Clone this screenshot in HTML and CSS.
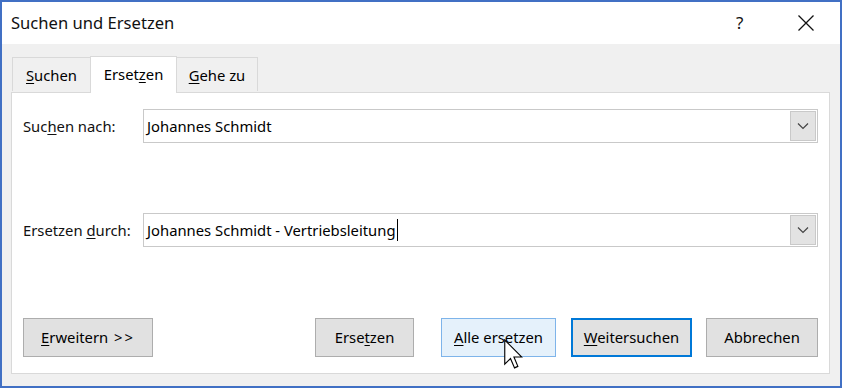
FILE: index.html
```html
<!DOCTYPE html>
<html lang="de">
<head>
<meta charset="utf-8">
<title>Suchen und Ersetzen</title>
<link rel="stylesheet" href="styles.css">
</head>
<body>
<div class="window">
  <div class="titlebar">
    <span class="title">Suchen und Ersetzen</span>
    <span class="help">?</span>
    <span class="close">
      <svg width="16" height="16" viewBox="0 0 16 16"><path d="M0.5 0.5 L15.5 15.5 M15.5 0.5 L0.5 15.5" stroke="#111" stroke-width="1.3" fill="none"/></svg>
    </span>
  </div>
  <div class="body">
    <div class="tabs">
      <div class="tab"><u>S</u>uchen</div>
      <div class="tab active">Erset<u>z</u>en</div>
      <div class="tab"><u>G</u>ehe zu</div>
    </div>
    <div class="panel">
      <div class="row first">
        <span class="label">Suc<u>h</u>en nach:</span>
        <div class="combo">
          <span class="value">Johannes Schmidt</span>
          <span class="drop"><svg width="12" height="8" viewBox="0 0 12 8"><path d="M1 1.5 L6 6.5 L11 1.5" stroke="#444" stroke-width="1.2" fill="none"/></svg></span>
        </div>
      </div>
      <div class="row second">
        <span class="label">Ersetzen <u>d</u>urch:</span>
        <div class="combo">
          <span class="value">Johannes Schmidt - Vertriebsleitung<span class="caret"></span></span>
          <span class="drop"><svg width="12" height="8" viewBox="0 0 12 8"><path d="M1 1.5 L6 6.5 L11 1.5" stroke="#444" stroke-width="1.2" fill="none"/></svg></span>
        </div>
      </div>
      <div class="buttons">
        <button class="btn b-more"><u>E</u>rweitern <span class="arrows">&gt;&gt;</span></button>
        <div class="spacer"></div>
        <button class="btn b-repl">Erse<u>t</u>zen</button>
        <button class="btn b-all hover"><u>A</u>lle ersetzen
          <svg class="cursor" width="19" height="30" viewBox="0 0 12.6 19.6"><path d="M0.5 0.5 L0.5 16.5 L4.3 12.8 L7 19 L9.2 18 L6.6 11.8 L11.8 11.8 Z" fill="#fff" stroke="#000" stroke-width="0.75" stroke-linejoin="miter"/></svg>
        </button>
        <button class="btn b-next default"><u>W</u>eitersuchen</button>
        <button class="btn b-cancel">Abbrechen</button>
      </div>
    </div>
  </div>
</div>
</body>
</html>
```
FILE: styles.css
```css
* { box-sizing: border-box; }
html, body { margin: 0; padding: 0; background: #fff; }
body {
  font-family: "Noto Sans", "Open Sans", sans-serif;
  font-size: 14.8px;
  color: #000;
}
u { text-decoration: underline; text-underline-offset: 2px; text-decoration-thickness: 1px; }
.window {
  width: 842px;
  height: 388px;
  border: 2px solid #4170c4;
  display: flex;
  flex-direction: column;
  background: #f0f0f0;
}
.titlebar {
  height: 42px;
  background: #fff;
  display: flex;
  align-items: center;
  padding-left: 9px;
  flex-shrink: 0;
}
.title {
  font-size: 16.6px;
  color: #111;
  flex: 1;
  padding-bottom: 1px;
}
.help {
  font-size: 17px;
  color: #111;
  width: 16px;
  margin-right: 46px;
  padding-bottom: 2px;
}
.close {
  width: 16px;
  height: 16px;
  margin-right: 26px;
  display: flex;
}
.body {
  flex: 1;
  padding: 12px 10px 12px 9px;
  display: flex;
  flex-direction: column;
}
.tabs {
  display: flex;
  height: 36px;
  align-items: flex-end;
  padding-left: 1px;
  position: relative;
  z-index: 1;
}
.tab {
  height: 34px;
  border: 1px solid #d9d9d9;
  border-bottom: none;
  background: #f0f0f0;
  display: flex;
  align-items: center;
  justify-content: center;
  color: #000;
  margin-bottom: 1px;
}
.tab:nth-child(1) { width: 78px; border-right: none; }
.tab.active {
  width: 87px;
  height: 37px;
  background: #fff;
  margin-bottom: -1px;
  border-left: 1px solid #d9d9d9;
  border-right: 1px solid #d9d9d9;
  padding-bottom: 2px;
}
.tab:nth-child(3) { width: 81px; border-left: none; }
.panel {
  flex: 1;
  background: #fff;
  border: 1px solid #d9d9d9;
  padding: 16px 11px 16px 11px;
  display: flex;
  flex-direction: column;
}
.row {
  display: flex;
  align-items: center;
  height: 34px;
}
.row.second { margin-top: 70px; }
.label {
  width: 120px;
  flex-shrink: 0;
  padding-bottom: 1px;
  color: #111;
}
.combo {
  flex: 1;
  height: 34px;
  border: 1px solid #c9c9c9;
  display: flex;
  align-items: stretch;
  background: #fff;
}
.value {
  flex: 1;
  display: flex;
  align-items: center;
  padding-left: 3px;
  padding-bottom: 1px;
  color: #000;
}
.caret {
  display: inline-block;
  width: 1px;
  height: 22px;
  background: #000;
  margin-left: 1px;
}
.drop {
  width: 26px;
  margin: 1px;
  border: 1px solid #c9c9c9;
  background: #e3e3e3;
  display: flex;
  align-items: center;
  justify-content: center;
}
.buttons {
  display: flex;
  margin-top: auto;
  height: 39px;
}
.spacer { flex: 1; }
.btn {
  font: inherit;
  color: #000;
  height: 39px;
  background: #e1e1e1;
  border: 1px solid #adadad;
  padding: 0 0 2px 0;
  margin: 0;
  position: relative;
}
.arrows { letter-spacing: 2px; margin-left: 2px; }
.b-more { width: 130px; }
.b-repl { width: 99px; }
.b-all { width: 115px; margin-left: 27px; }
.b-next { width: 121px; margin-left: 15px; }
.b-cancel { width: 112px; margin-left: 14px; }
.btn.hover {
  background: #e5f1fb;
  border-color: #7eb4ea;
}
.btn.default {
  border: 2px solid #0078d7;
}
.cursor {
  position: absolute;
  left: 62px;
  top: 20px;
}
```
